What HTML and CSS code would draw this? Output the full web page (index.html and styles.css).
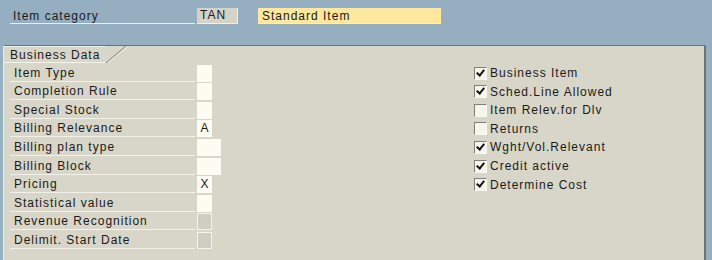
FILE: index.html
```html
<!DOCTYPE html>
<html>
<head>
<meta charset="utf-8">
<link rel="stylesheet" href="styles.css">
</head>
<body>
<div class="header">
  <div class="hlabel">Item category</div>
  <div class="tan">TAN</div>
  <div class="desc">Standard Item</div>
</div>
<div class="panel">
  <div class="tabbar">
    <div class="tab">Business Data</div>
    <svg class="slant" width="22" height="17" viewBox="0 0 22 17"><line x1="21" y1="0" x2="1" y2="17" stroke="#7d7f7c" stroke-width="1"/><line x1="22" y1="1" x2="2.5" y2="17" stroke="#f4f3ea" stroke-width="1"/></svg>
  </div>
  <div class="content">
    <div class="left">
      <div class="row"><span class="lbl">Item Type</span><span class="inp"></span></div>
      <div class="row"><span class="lbl">Completion Rule</span><span class="inp"></span></div>
      <div class="row"><span class="lbl">Special Stock</span><span class="inp"></span></div>
      <div class="row"><span class="lbl">Billing Relevance</span><span class="inp">A</span></div>
      <div class="row"><span class="lbl">Billing plan type</span><span class="inp wide"></span></div>
      <div class="row"><span class="lbl">Billing Block</span><span class="inp wide"></span></div>
      <div class="row"><span class="lbl">Pricing</span><span class="inp">X</span></div>
      <div class="row"><span class="lbl">Statistical value</span><span class="inp"></span></div>
      <div class="row"><span class="lbl">Revenue Recognition</span><span class="inp dis"></span></div>
      <div class="row"><span class="lbl">Delimit. Start Date</span><span class="inp dis"></span></div>
    </div>
    <div class="right">
      <div class="row"><span class="cb on"></span><span class="clbl">Business Item</span></div>
      <div class="row"><span class="cb on"></span><span class="clbl">Sched.Line Allowed</span></div>
      <div class="row"><span class="cb"></span><span class="clbl">Item Relev.for Dlv</span></div>
      <div class="row"><span class="cb"></span><span class="clbl">Returns</span></div>
      <div class="row"><span class="cb on"></span><span class="clbl">Wght/Vol.Relevant</span></div>
      <div class="row"><span class="cb on"></span><span class="clbl">Credit active</span></div>
      <div class="row"><span class="cb on"></span><span class="clbl">Determine Cost</span></div>
    </div>
  </div>
</div>
</body>
</html>
```
FILE: styles.css
```css
html, body {
  margin: 0;
  padding: 0;
  height: 260px;
  overflow: hidden;
}
body {
  background: #95afc1;
  font-family: "Liberation Sans", Arial, sans-serif;
  font-size: 12px;
  letter-spacing: 1px;
  color: #1a1a1a;
}
.header {
  height: 45px;
  display: flex;
  align-items: flex-start;
  padding-top: 8px;
  box-sizing: border-box;
}
.hlabel {
  margin-left: 10px;
  width: 185px;
  height: 16px;
  line-height: 16px;
  padding-left: 3px;
  box-sizing: border-box;
  border-bottom: 1px solid #e8eef2;
}
.tan {
  margin-left: 2px;
  width: 41px;
  height: 16px;
  line-height: 14px;
  padding-left: 3px;
  box-sizing: border-box;
  background: #d5d2c8;
  border-right: 1px solid #eef0ee;
  border-bottom: 1px solid #eef0ee;
}
.desc {
  margin-left: 20px;
  width: 183px;
  height: 16px;
  line-height: 16px;
  padding-left: 4px;
  box-sizing: border-box;
  background: #fde89e;
  border-bottom: 1px solid #f4f0da;
}
.panel {
  margin-left: 3px;
  width: 703px;
  height: 215px;
  box-sizing: border-box;
  background: #d8d6c9;
  border-top: 1px solid #6e7474;
  border-right: 2px solid #6e7474;
  border-left: 1px solid #eceae0;
}
.tabbar {
  display: flex;
  height: 17px;
}
.tab {
  width: 101px;
  height: 17px;
  line-height: 16px;
  padding-left: 6px;
  box-sizing: border-box;
  border-top: 1px solid #f4f3ea;
  border-bottom: 1px solid #f4f3ea;
  white-space: nowrap;
}
.slant {
  display: block;
}
.content {
  display: flex;
  padding-top: 1px;
}
.left {
  width: 470px;
}
.row {
  display: flex;
  align-items: center;
  height: 18.55px;
}
.lbl {
  margin-left: 6px;
  width: 185px;
  height: 17px;
  line-height: 16px;
  padding-left: 4px;
  box-sizing: border-box;
  border-bottom: 1px solid #f2f1e8;
  white-space: nowrap;
}
.inp {
  margin-left: 2px;
  width: 15px;
  height: 17px;
  line-height: 17px;
  box-sizing: border-box;
  background: #fcfcf2;
  text-align: center;
  letter-spacing: 0;
  font-size: 12px;
}
.inp.wide {
  width: 24px;
}
.inp.dis {
  background: #d0cec4;
  border: 1px solid #f4f3ea;
}
.cb {
  width: 13px;
  height: 13px;
  box-sizing: border-box;
  margin-left: 0;
  background: #f6f5ec;
  border-top: 1px solid #7e7f7a;
  border-left: 1px solid #7e7f7a;
  border-right: 1px solid #fbfbf6;
  border-bottom: 1px solid #fbfbf6;
  position: relative;
}
.cb.on::after {
  content: "";
  position: absolute;
  left: 2px;
  top: 1px;
  width: 3px;
  height: 6px;
  border-right: 2px solid #111;
  border-bottom: 2px solid #111;
  transform: rotate(40deg);
  transform-origin: center;
  left: 3px;
  top: 0px;
}
.clbl {
  margin-left: 3px;
  white-space: nowrap;
}
```
